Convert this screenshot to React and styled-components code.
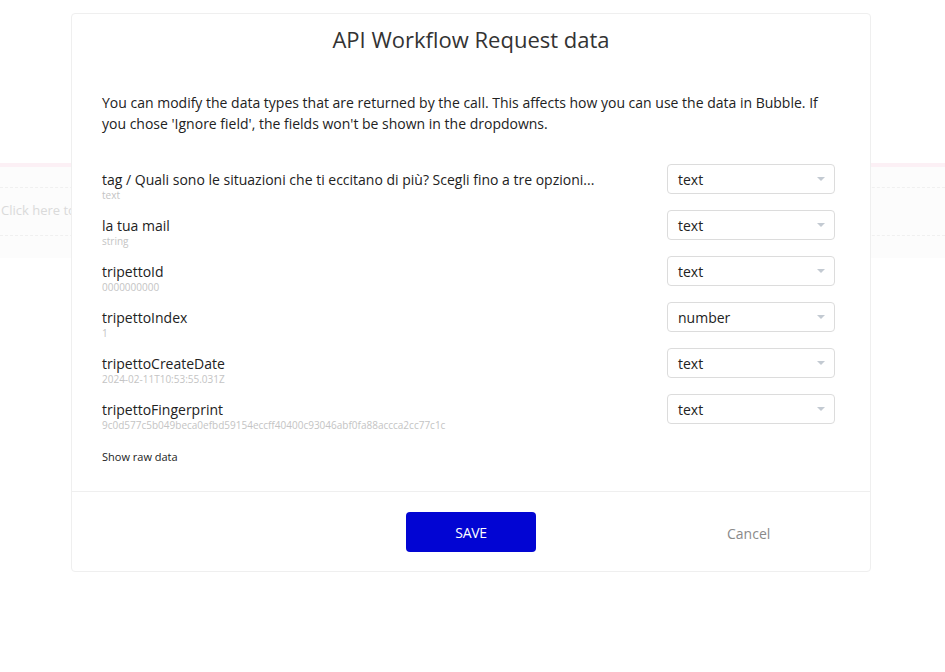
import React from 'react';
import styled, { createGlobalStyle } from 'styled-components';

const GlobalStyle = createGlobalStyle`
    html, body {
        margin: 0;
        padding: 0;
        background: #ffffff;
        font-family: "Open Sans", "Liberation Sans", sans-serif;
        color: #333;
    }
    * {
        box-sizing: border-box;
    }
`;

const Page = styled.div`
    position: relative;
    width: 945px;
    height: 672px;
    overflow: hidden;
    padding-top: 163px;
`;

const PinkBar = styled.div`
    height: 4px;
    background: #fcf0f5;
`;

const BackPanel = styled.div`
    height: 91px;
    background: #fcfcfc;
    padding-top: 20px;
`;

const BackRow = styled.div`
    border-top: 1px dashed #f0f0f0;
    border-bottom: 1px dashed #f0f0f0;
    height: 49px;
    display: flex;
    align-items: center;
    padding-bottom: 3px;
    font-size: 13px;
    color: #dadada;
    padding-left: 1px;
`;

const Modal = styled.div`
    position: absolute;
    left: 71px;
    top: 13px;
    width: 800px;
    background: #ffffff;
    border: 1px solid #efefef;
    border-radius: 4px;
`;

const Title = styled.h2`
    margin: 0;
    padding-top: 10px;
    font-size: 22px;
    line-height: 30px;
    font-weight: 400;
    text-align: center;
    color: #333;
`;

const Body = styled.div`
    padding: 38px 35px 27px 30px;
`;

const Description = styled.p`
    margin: 0 0 30px;
    font-size: 14px;
    line-height: 21px;
    color: #222;
`;

const FieldRow = styled.div`
    display: flex;
    align-items: flex-start;
    justify-content: space-between;
    margin-bottom: 9px;
`;

const FieldInfo = styled.div`
    padding-top: 7px;
    display: flex;
    flex-direction: column;
`;

const FieldName = styled.span`
    font-size: 14px;
    line-height: 18px;
    color: #222;
`;

const FieldSample = styled.span`
    font-size: 10px;
    line-height: 12px;
    color: #c4c4c4;
`;

const Select = styled.div`
    width: 168px;
    height: 30px;
    border: 1px solid #dcdcdc;
    border-radius: 4px;
    display: flex;
    align-items: center;
    justify-content: space-between;
    padding: 0 9px 0 10px;
    font-size: 14px;
    color: #222;
`;

const Arrow = styled.span`
    width: 0;
    height: 0;
    border-left: 4.5px solid transparent;
    border-right: 4.5px solid transparent;
    border-top: 4.5px solid #c3cad2;
`;

const RawLink = styled.div`
    margin-top: 18px;
    font-size: 11px;
    line-height: 15px;
    color: #222;
`;

const Footer = styled.div`
    border-top: 1px solid #efefef;
    padding: 20px 0 19px;
    display: grid;
    grid-template-columns: 1fr 130px 1fr;
    align-items: center;
`;

const SaveButton = styled.button`
    grid-column: 2;
    height: 40px;
    border: none;
    border-radius: 4px;
    background: #0205d3;
    color: #ffffff;
    font-family: "Open Sans", "Liberation Sans", sans-serif;
    font-size: 14px;
    letter-spacing: -0.3px;
    cursor: pointer;
`;

const CancelLink = styled.span`
    grid-column: 3;
    padding-left: 191px;
    padding-top: 3px;
    font-size: 14px;
    color: #8a8a8a;
    cursor: pointer;
`;

const fields = [
    { name: 'tag / Quali sono le situazioni che ti eccitano di più? Scegli fino a tre opzioni...', sample: 'text', type: 'text' },
    { name: 'la tua mail', sample: 'string', type: 'text' },
    { name: 'tripettoId', sample: '0000000000', type: 'text' },
    { name: 'tripettoIndex', sample: '1', type: 'number' },
    { name: 'tripettoCreateDate', sample: '2024-02-11T10:53:55.031Z', type: 'text' },
    { name: 'tripettoFingerprint', sample: '9c0d577c5b049beca0efbd59154eccff40400c93046abf0fa88accca2cc77c1c', type: 'text' },
];

export default function App() {
    return (
        <Page>
            <GlobalStyle />
            <PinkBar />
            <BackPanel>
                <BackRow>Click here to</BackRow>
            </BackPanel>
            <Modal>
                <Title>API Workflow Request data</Title>
                <Body>
                    <Description>
                        You can modify the data types that are returned by the call. This affects how you can use the data in Bubble. If you chose 'Ignore field', the fields won't be shown in the dropdowns.
                    </Description>
                    {fields.map((field) => (
                        <FieldRow key={field.name}>
                            <FieldInfo>
                                <FieldName>{field.name}</FieldName>
                                <FieldSample>{field.sample}</FieldSample>
                            </FieldInfo>
                            <Select>
                                <span>{field.type}</span>
                                <Arrow />
                            </Select>
                        </FieldRow>
                    ))}
                    <RawLink>Show raw data</RawLink>
                </Body>
                <Footer>
                    <SaveButton>SAVE</SaveButton>
                    <CancelLink>Cancel</CancelLink>
                </Footer>
            </Modal>
        </Page>
    );
}
